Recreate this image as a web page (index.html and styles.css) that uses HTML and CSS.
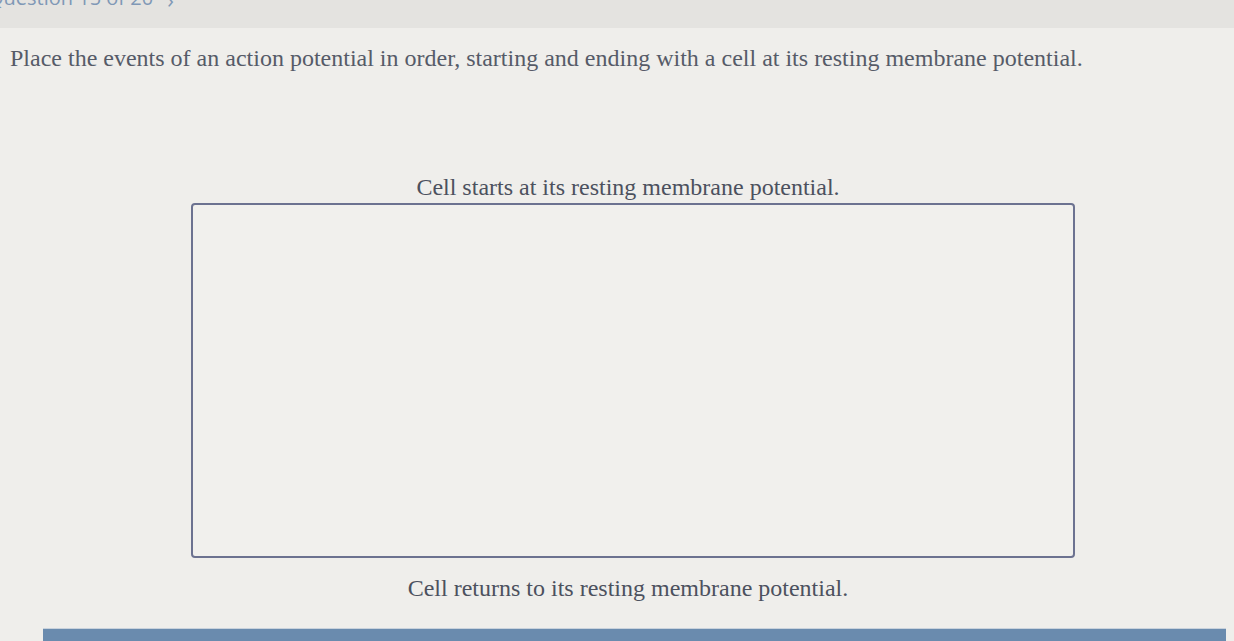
FILE: index.html
```html
<!DOCTYPE html>
<html lang="en">
<head>
  <meta charset="UTF-8">
  <title>Question 15 of 20</title>
  <link rel="stylesheet" href="styles.css">
</head>
<body>
  <div class="topbar">
    <span class="q-count">Question 15 of 20</span>
    <span class="q-next">&#8250;</span>
  </div>

  <div class="page">
    <p class="prompt">Place the events of an action potential in order, starting and ending with a cell at its resting membrane potential.</p>

    <div class="sorter">
      <div class="sorter-label">Cell starts at its resting membrane potential.</div>
      <div class="drop-zone"></div>
      <div class="sorter-label bottom">Cell returns to its resting membrane potential.</div>
    </div>
  </div>

  <div class="footer-bar"></div>
</body>
</html>
```

FILE: styles.css
```css
* { margin: 0; padding: 0; box-sizing: border-box; }
body {
  background-color: #efeeeb;
  height: 100vh;
  overflow: hidden;
  display: flex;
  flex-direction: column;
  font-family: "Liberation Serif", "Times New Roman", serif;
}
.topbar {
  height: 28px;
  background-color: #e4e3e0;
  overflow: hidden;
  display: flex;
  align-items: flex-start;
  gap: 14px;
  font-family: "Open Sans", "Liberation Sans", sans-serif;
  color: #7f98b6;
}
.q-count {
  font-size: 20px;
  line-height: 20px;
  margin-top: -12px;
  margin-left: -12px;
}
.q-next {
  font-size: 22px;
  line-height: 20px;
  margin-top: -11px;
}
.page {
  flex: 1;
  padding: 0 10px;
}
.prompt {
  font-size: 24px;
  line-height: 28px;
  color: #565b68;
  margin-top: 16px;
  white-space: nowrap;
}
.sorter {
  width: 884px;
  margin-left: 181px;
  margin-top: 102px;
  display: flex;
  flex-direction: column;
}
.sorter-label {
  text-align: center;
  font-size: 24px;
  line-height: 26px;
  color: #4c515e;
  padding-right: 10px;
}
.drop-zone {
  height: 355px;
  margin-top: 3px;
  border: 2px solid #6c7290;
  border-radius: 4px;
  background-color: #f1f0ed;
}
.sorter-label.bottom {
  margin-top: 17px;
}
.footer-bar {
  height: 13px;
  margin-left: 43px;
  margin-right: 8px;
  background-color: #6a8bae;
  border-top: 1px solid #c9d2dc;
}
```
